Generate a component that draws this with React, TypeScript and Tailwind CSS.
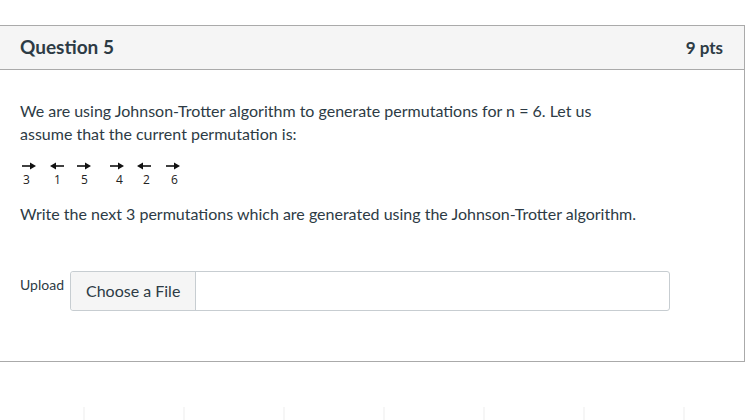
import type { ReactNode } from "react";

function Arrow({ dir }: { dir: "l" | "r" }) {
  return (
    <svg width="14" height="8" viewBox="0 0 14 8" className="block">
      {dir === "r" ? (
        <>
          <line x1="0" y1="4" x2="9" y2="4" stroke="#111" strokeWidth="1.6" />
          <path d="M8 0.5 L14 4 L8 7.5 Z" fill="#111" />
        </>
      ) : (
        <>
          <line x1="5" y1="4" x2="14" y2="4" stroke="#111" strokeWidth="1.6" />
          <path d="M6 0.5 L0 4 L6 7.5 Z" fill="#111" />
        </>
      )}
    </svg>
  );
}

const perm: { n: number; d: "l" | "r"; w: string; pl: string }[] = [
  { n: 3, d: "r", w: "w-[28px]", pl: "pl-[1px]" },
  { n: 1, d: "l", w: "w-[27px]", pl: "pl-[4px]" },
  { n: 5, d: "r", w: "w-[33px]", pl: "pl-[4px]" },
  { n: 4, d: "r", w: "w-[27px]", pl: "pl-[6px]" },
  { n: 2, d: "l", w: "w-[29px]", pl: "pl-[6px]" },
  { n: 6, d: "r", w: "w-[20px]", pl: "pl-[5px]" },
];

function Para({ children, className = "" }: { children: ReactNode; className?: string }) {
  return <p className={`text-[16px] leading-[23px] text-[#2d3b45] ${className}`}>{children}</p>;
}

export default function App() {
  return (
    <div className="w-[746px] h-[420px] bg-white overflow-hidden font-['Lato',sans-serif]">
      <div className="pt-[25px]">
        <div className="w-[745px] border-t border-r border-b border-[#aaaaaa]">
          <header className="h-[44px] bg-[#f5f5f5] border-b border-[#aaaaaa] flex items-center justify-between pl-[20px] pr-[21px]">
            <h2 className="text-[19px] font-bold text-[#2d3b45]">Question 5</h2>
            <span className="text-[17px] font-bold text-[#2d3b45]">9 pts</span>
          </header>

          <div className="pl-[20px] pt-[29px] pb-[50px]">
            <Para>
              We are using Johnson-Trotter algorithm to generate permutations for n = 6. Let us
              <br />
              assume that the current permutation is:
            </Para>

            <div className="mt-[17px] flex pl-[2px] font-['Open_Sans',sans-serif] text-[12px] text-[#222]">
              {perm.map((p) => (
                <div key={p.n} className={`flex flex-col ${p.w}`}>
                  <Arrow dir={p.d} />
                  <span className={`${p.pl} mt-[2px] leading-[16px]`}>{p.n}</span>
                </div>
              ))}
            </div>

            <Para className="mt-[14px]">
              Write the next 3 permutations which are generated using the Johnson-Trotter algorithm.
            </Para>

            <div className="mt-[46px] flex items-start gap-[6px]">
              <span className="text-[14px] text-[#2d3b45] mt-[3px]">Upload</span>
              <div className="w-[600px] h-[40px] flex border border-[#c7cdd1] rounded-[3px] bg-white">
                <button className="h-full px-[15px] bg-[#f5f5f5] border-r border-[#c7cdd1] rounded-l-[3px] text-[16px] text-[#2d3b45]">
                  Choose a File
                </button>
              </div>
            </div>
          </div>
        </div>

        <div className="mt-[45px] flex gap-[98px] pl-[83px]">
          {[0, 1, 2, 3, 4, 5, 6].map((i) => (
            <div key={i} className="w-[2px] h-[13px] bg-[#f6f6f6]" />
          ))}
        </div>
      </div>
    </div>
  );
}
